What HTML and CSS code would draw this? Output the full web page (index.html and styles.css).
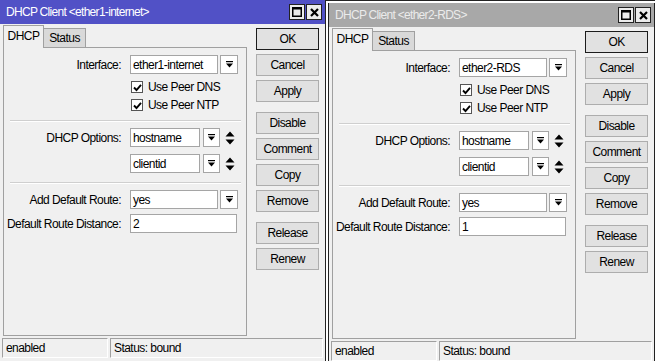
FILE: index.html
```html
<!DOCTYPE html>
<html>
<head>
<meta charset="utf-8">
<link rel="stylesheet" href="styles.css">
</head>
<body>
<div class="backline"></div>

<div class="window win-left active">
  <div class="titlebar">
    <span class="title">DHCP Client &lt;ether1-internet&gt;</span>
    <div class="tb-btns">
      <span class="tb-btn"><svg width="10" height="10" viewBox="0 0 10 10"><rect x="0.75" y="0.75" width="8.5" height="8.5" fill="none" stroke="#000" stroke-width="1.5"/><rect x="0" y="0" width="10" height="2.5"/></svg></span>
      <span class="tb-btn"><svg width="9" height="9" viewBox="0 0 9 9"><path d="M1 1L8 8M8 1L1 8" stroke="#000" stroke-width="2.2" fill="none"/></svg></span>
    </div>
  </div>
  <div class="wbody">
    <div class="main">
      <div class="tabs">
        <div class="tab tab-active">DHCP</div>
        <div class="tab tab-inactive">Status</div>
        <div class="tab-fill"></div>
      </div>
      <div class="panel">
        <div class="row r-iface">
          <span class="label">Interface:</span>
          <span class="input w-iface">ether1-internet</span>
          <span class="dd"><svg width="7" height="7" viewBox="0 0 7 7"><rect x="0" y="0" width="7" height="1.2"/><path d="M0 2.4h7L3.5 6.6z"/></svg></span>
        </div>
        <div class="row r-check r-dns">
          <span class="label"></span>
          <span class="cb"><svg width="9" height="9" viewBox="0 0 9 9"><path d="M1 4.5L3.5 7L8 1.8" stroke="#000" stroke-width="1.9" fill="none"/></svg></span>
          <span class="cb-text">Use Peer DNS</span>
        </div>
        <div class="row r-check">
          <span class="label"></span>
          <span class="cb"><svg width="9" height="9" viewBox="0 0 9 9"><path d="M1 4.5L3.5 7L8 1.8" stroke="#000" stroke-width="1.9" fill="none"/></svg></span>
          <span class="cb-text">Use Peer NTP</span>
        </div>
        <div class="sep sep1"></div>
        <div class="row r-opt1">
          <span class="label">DHCP Options:</span>
          <span class="input w-opt">hostname</span>
          <span class="dd dd-opt"><svg width="7" height="7" viewBox="0 0 7 7"><rect x="0" y="0" width="7" height="1.2"/><path d="M0 2.4h7L3.5 6.6z"/></svg></span>
          <span class="updown"><svg width="10" height="14" viewBox="0 0 10 14"><path d="M5 0.5L9.5 5.5H0.5z M0.5 8.5h9L5 13.5z"/></svg></span>
        </div>
        <div class="row r-opt2">
          <span class="label"></span>
          <span class="input w-opt">clientid</span>
          <span class="dd dd-opt"><svg width="7" height="7" viewBox="0 0 7 7"><rect x="0" y="0" width="7" height="1.2"/><path d="M0 2.4h7L3.5 6.6z"/></svg></span>
          <span class="updown"><svg width="10" height="14" viewBox="0 0 10 14"><path d="M5 0.5L9.5 5.5H0.5z M0.5 8.5h9L5 13.5z"/></svg></span>
        </div>
        <div class="sep sep2"></div>
        <div class="row r-adr">
          <span class="label">Add Default Route:</span>
          <span class="input w-iface">yes</span>
          <span class="dd"><svg width="7" height="7" viewBox="0 0 7 7"><rect x="0" y="0" width="7" height="1.2"/><path d="M0 2.4h7L3.5 6.6z"/></svg></span>
        </div>
        <div class="row r-drd">
          <span class="label">Default Route Distance:</span>
          <span class="input w-full">2</span>
        </div>
      </div>
    </div>
    <div class="buttons">
      <div class="btn btn-default">OK</div>
      <div class="btn">Cancel</div>
      <div class="btn">Apply</div>
      <div class="btn group">Disable</div>
      <div class="btn">Comment</div>
      <div class="btn">Copy</div>
      <div class="btn">Remove</div>
      <div class="btn group">Release</div>
      <div class="btn">Renew</div>
    </div>
  </div>
  <div class="statusbar">
    <div class="cell c1">enabled</div>
    <div class="cell c2">Status: bound</div>
  </div>
</div>

<div class="window win-right">
  <div class="titlebar">
    <span class="title">DHCP Client &lt;ether2-RDS&gt;</span>
    <div class="tb-btns">
      <span class="tb-btn"><svg width="10" height="10" viewBox="0 0 10 10"><rect x="0.75" y="0.75" width="8.5" height="8.5" fill="none" stroke="#000" stroke-width="1.5"/><rect x="0" y="0" width="10" height="2.5"/></svg></span>
      <span class="tb-btn"><svg width="9" height="9" viewBox="0 0 9 9"><path d="M1 1L8 8M8 1L1 8" stroke="#000" stroke-width="2.2" fill="none"/></svg></span>
    </div>
  </div>
  <div class="wbody">
    <div class="main">
      <div class="tabs">
        <div class="tab tab-active">DHCP</div>
        <div class="tab tab-inactive">Status</div>
        <div class="tab-fill"></div>
      </div>
      <div class="panel">
        <div class="row r-iface">
          <span class="label">Interface:</span>
          <span class="input w-iface">ether2-RDS</span>
          <span class="dd"><svg width="7" height="7" viewBox="0 0 7 7"><rect x="0" y="0" width="7" height="1.2"/><path d="M0 2.4h7L3.5 6.6z"/></svg></span>
        </div>
        <div class="row r-check r-dns">
          <span class="label"></span>
          <span class="cb"><svg width="9" height="9" viewBox="0 0 9 9"><path d="M1 4.5L3.5 7L8 1.8" stroke="#000" stroke-width="1.9" fill="none"/></svg></span>
          <span class="cb-text">Use Peer DNS</span>
        </div>
        <div class="row r-check">
          <span class="label"></span>
          <span class="cb"><svg width="9" height="9" viewBox="0 0 9 9"><path d="M1 4.5L3.5 7L8 1.8" stroke="#000" stroke-width="1.9" fill="none"/></svg></span>
          <span class="cb-text">Use Peer NTP</span>
        </div>
        <div class="sep sep1"></div>
        <div class="row r-opt1">
          <span class="label">DHCP Options:</span>
          <span class="input w-opt">hostname</span>
          <span class="dd dd-opt"><svg width="7" height="7" viewBox="0 0 7 7"><rect x="0" y="0" width="7" height="1.2"/><path d="M0 2.4h7L3.5 6.6z"/></svg></span>
          <span class="updown"><svg width="10" height="14" viewBox="0 0 10 14"><path d="M5 0.5L9.5 5.5H0.5z M0.5 8.5h9L5 13.5z"/></svg></span>
        </div>
        <div class="row r-opt2">
          <span class="label"></span>
          <span class="input w-opt">clientid</span>
          <span class="dd dd-opt"><svg width="7" height="7" viewBox="0 0 7 7"><rect x="0" y="0" width="7" height="1.2"/><path d="M0 2.4h7L3.5 6.6z"/></svg></span>
          <span class="updown"><svg width="10" height="14" viewBox="0 0 10 14"><path d="M5 0.5L9.5 5.5H0.5z M0.5 8.5h9L5 13.5z"/></svg></span>
        </div>
        <div class="sep sep2"></div>
        <div class="row r-adr">
          <span class="label">Add Default Route:</span>
          <span class="input w-iface">yes</span>
          <span class="dd"><svg width="7" height="7" viewBox="0 0 7 7"><rect x="0" y="0" width="7" height="1.2"/><path d="M0 2.4h7L3.5 6.6z"/></svg></span>
        </div>
        <div class="row r-drd">
          <span class="label">Default Route Distance:</span>
          <span class="input w-full">1</span>
        </div>
      </div>
    </div>
    <div class="buttons">
      <div class="btn btn-default">OK</div>
      <div class="btn">Cancel</div>
      <div class="btn">Apply</div>
      <div class="btn group">Disable</div>
      <div class="btn">Comment</div>
      <div class="btn">Copy</div>
      <div class="btn">Remove</div>
      <div class="btn group">Release</div>
      <div class="btn">Renew</div>
    </div>
  </div>
  <div class="statusbar">
    <div class="cell c1">enabled</div>
    <div class="cell c2">Status: bound</div>
  </div>
</div>
</body>
</html>
```

FILE: styles.css
```css
* { box-sizing: border-box; }

body {
  margin: 0;
  width: 655px;
  height: 361px;
  overflow: hidden;
  position: relative;
  background: #ffffff;
  font-family: "Liberation Sans", Arial, sans-serif;
  font-size: 12px;
  letter-spacing: -0.55px;
  color: #000;
}

.backline {
  position: absolute;
  left: 326px;
  top: 0;
  width: 329px;
  height: 1px;
  background: #222;
}

.window {
  position: absolute;
  width: 327px;
  height: 364px;
  background: #f0f0f0;
  border-left: 1px solid #222;
  border-right: 1px solid #222;
  display: flex;
  flex-direction: column;
}

.win-left { left: -1px; top: 0; }
.win-right { left: 328px; top: 3px; }

.titlebar {
  height: 24px;
  flex: none;
  display: flex;
  align-items: center;
  padding: 0 3px 0 6px;
  background: #5151c6;
  color: #fff;
}

.win-right .titlebar {
  background: #a8a8a8;
  color: #ebebeb;
}

.title {
  white-space: nowrap;
  letter-spacing: -0.7px;
}

.tb-btns {
  margin-left: auto;
  display: flex;
  gap: 1px;
}

.tb-btn {
  width: 16px;
  height: 16px;
  border: 1px solid #222;
  background: #ececec;
  display: flex;
  align-items: center;
  justify-content: center;
}

.wbody {
  height: 312px;
  flex: none;
  display: flex;
  padding-left: 3px;
}

.main {
  width: 244px;
  padding-top: 1px;
  display: flex;
  flex-direction: column;
}

.tabs {
  height: 23px;
  display: flex;
  align-items: flex-end;
}

.tab {
  display: flex;
  justify-content: center;
  align-items: center;
  border: 1px solid #a0a0a0;
}

.tab-active {
  width: 41px;
  height: 23px;
  border-bottom: none;
  background: #f0f0f0;
  padding-bottom: 2px;
}

.tab-inactive {
  width: 42px;
  height: 20px;
  border-left: none;
  background: #d9d9d9;
  padding-bottom: 1px;
}

.tab-fill {
  flex: 1;
  height: 1px;
  background: #a0a0a0;
}

.panel {
  height: 288px;
  border: 1px solid #a0a0a0;
  border-top: none;
  padding-top: 7px;
}

.row {
  display: flex;
  align-items: center;
  height: 19px;
}

.label {
  width: 117px;
  flex: none;
  text-align: right;
  margin-right: 9px;
  white-space: nowrap;
}

.r-check { height: 18px; }
.r-dns { margin-top: 4px; }
.r-opt1 { margin-top: 6px; }
.r-opt2 { margin-top: 7px; }
.r-adr { margin-top: 6px; }
.r-drd { margin-top: 5px; }

.sep {
  margin: 0 5px 0 6px;
  height: 2px;
  border-top: 1px solid #cfcfcf;
  border-bottom: 1px solid #ffffff;
}

.sep1 { margin-top: 6px; }
.sep2 { margin-top: 9px; }

.input {
  height: 19px;
  background: #fff;
  border: 1px solid #a5a5a5;
  padding-left: 2px;
  display: flex;
  align-items: center;
  white-space: nowrap;
  overflow: hidden;
}

.w-iface { width: 88px; }
.w-opt { width: 70px; }
.w-full { width: 107px; }

.dd {
  width: 18px;
  height: 19px;
  margin-left: 2px;
  background: #fff;
  border: 1px solid #a5a5a5;
  display: flex;
  align-items: center;
  justify-content: center;
}

.dd-opt {
  width: 17px;
  margin-left: 3px;
}

.updown {
  margin-left: 5px;
  display: flex;
  align-items: center;
}

.cb {
  width: 12px;
  height: 12px;
  margin-left: 1px;
  background: #fff;
  border: 1px solid #555;
  display: flex;
  align-items: center;
  justify-content: center;
}

.cb-text { margin-left: 5px; }

.buttons {
  width: 63px;
  margin-left: 9px;
  margin-top: 4px;
  display: flex;
  flex-direction: column;
  gap: 4px;
}

.btn {
  height: 22px;
  border: 1px solid #adadad;
  background: #e1e1e1;
  display: flex;
  align-items: center;
  justify-content: center;
}

.btn-default { border-color: #1c1c1c; }

.group { margin-top: 6px; }

.statusbar {
  margin-top: 2px;
  height: 20px;
  flex: none;
  display: flex;
  gap: 2px;
  padding-left: 2px;
}

.cell {
  height: 20px;
  border-top: 1px solid #a0a0a0;
  border-left: 1px solid #a0a0a0;
  border-right: 1px solid #fff;
  border-bottom: 1px solid #fff;
  display: flex;
  align-items: center;
  padding-left: 3px;
  white-space: nowrap;
}

.c1 { width: 106px; }
.c2 { width: 213px; }
```
